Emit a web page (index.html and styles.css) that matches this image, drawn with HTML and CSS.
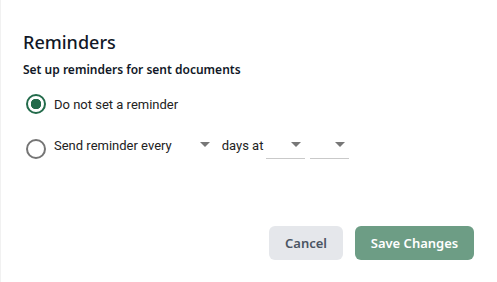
FILE: index.html
```html
<!DOCTYPE html>
<html>
<head>
<meta charset="utf-8">
<link rel="stylesheet" href="styles.css">
</head>
<body>
<div class="panel">
  <h1 class="title">Reminders</h1>
  <p class="subtitle">Set up reminders for sent documents</p>
  <div class="options">
    <label class="option">
      <span class="radio checked"></span>
      <span class="label">Do not set a reminder</span>
    </label>
    <label class="option">
      <span class="radio"></span>
      <span class="label">Send reminder every</span>
      <span class="select plain"><span class="caret"></span></span>
      <span class="label">days at</span>
      <span class="select"><span class="caret"></span></span>
      <span class="select"><span class="caret"></span></span>
    </label>
  </div>
  <div class="actions">
    <button class="btn cancel">Cancel</button>
    <button class="btn save">Save Changes</button>
  </div>
</div>
</body>
</html>
```
FILE: styles.css
```css
html, body {
  margin: 0;
  padding: 0;
  background: #ffffff;
}
body {
  width: 497px;
  height: 282px;
  overflow: hidden;
}
.panel {
  box-sizing: border-box;
  height: 282px;
  padding: 29px 23px 0 22px;
  border-left: 1px solid #f1f1f1;
  display: flex;
  flex-direction: column;
}
.title {
  margin: 0;
  font-family: "Noto Sans", "Open Sans", sans-serif;
  font-weight: 500;
  font-size: 18px;
  line-height: 26px;
  color: #111827;
}
.subtitle {
  margin: 7px 0 0 0;
  font-family: "Noto Sans", "Open Sans", sans-serif;
  font-weight: 600;
  font-size: 12px;
  line-height: 16px;
  color: #111827;
}
.options {
  margin-top: 15px;
  display: flex;
  flex-direction: column;
  gap: 23px;
}
.option {
  display: flex;
  align-items: center;
  height: 22px;
  font-family: Roboto, "Liberation Sans", sans-serif;
  font-size: 13px;
  color: #222222;
}
.option + .option .label {
  position: relative;
  top: -4px;
}
.radio {
  box-sizing: border-box;
  width: 20px;
  height: 20px;
  border-radius: 50%;
  border: 2px solid #757575;
  margin-left: 3px;
  margin-right: 8px;
  flex: none;
}
.radio.checked {
  border-color: #236b4b;
  background: radial-gradient(circle, #236b4b 0 5px, transparent 5.5px);
}
.select {
  box-sizing: border-box;
  width: 39px;
  height: 22px;
  border-bottom: 1px solid #c9c9c9;
  margin-left: 5px;
  position: relative;
  top: -1px;
  display: flex;
  align-items: center;
  justify-content: flex-end;
  padding-right: 4px;
}
.select.plain {
  border-bottom-color: transparent;
  width: 42px;
  margin-left: 0;
  margin-right: 8px;
}
.select + .label {
  margin-right: -2px;
}
.caret {
  width: 0;
  height: 0;
  border-left: 5px solid transparent;
  border-right: 5px solid transparent;
  border-top: 5px solid #777777;
  position: relative;
  top: -3px;
}
.actions {
  margin-top: auto;
  margin-bottom: 22px;
  display: flex;
  justify-content: flex-end;
  gap: 12px;
}
.btn {
  border: none;
  border-radius: 6px;
  height: 34px;
  font-family: "Noto Sans", "Open Sans", sans-serif;
  font-weight: 600;
  font-size: 13px;
  padding: 0;
  white-space: nowrap;
}
.cancel {
  width: 74px;
  background: #e5e7eb;
  color: #4b5563;
}
.save {
  width: 119px;
  background: #6d9d85;
  color: #ffffff;
}
```
